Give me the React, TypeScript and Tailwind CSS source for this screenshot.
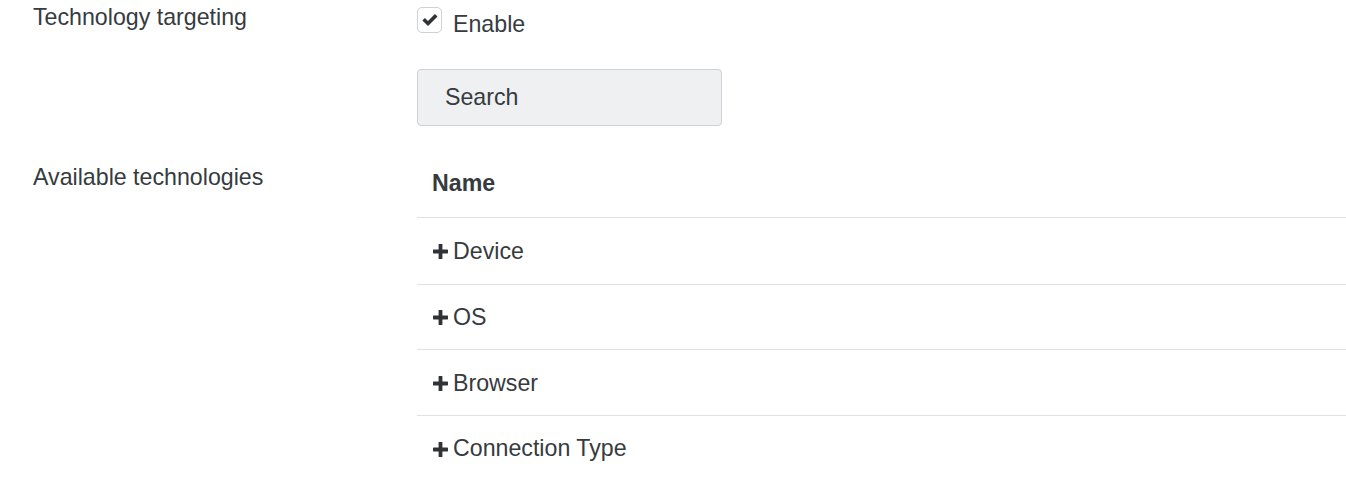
import React from "react";

const font = { fontFamily: '"Liberation Sans", Arial, Helvetica, sans-serif' };

function Plus() {
  return (
    <svg width="15" height="15" viewBox="0 0 15 15" className="mr-[5px] shrink-0" aria-hidden>
      <rect x="5.6" y="0" width="3.8" height="15" rx="0.6" fill="#2f3337" />
      <rect x="0" y="5.6" width="15" height="3.8" rx="0.6" fill="#2f3337" />
    </svg>
  );
}

function Check() {
  return (
    <svg width="16" height="12" viewBox="0 0 16 12" aria-hidden>
      <path d="M0.4 6.4 L2.9 3.9 L6 7 L12.9 0.1 L15.5 2.6 L6 12 Z" fill="#2f3337" />
    </svg>
  );
}

const rows = ["Device", "OS", "Browser", "Connection Type"];

export default function App() {
  return (
    <div className="w-[1346px] h-[496px] bg-white text-[#363b40] text-[23.2px] leading-[34.5px] overflow-hidden" style={font}>
      <div className="flex">
        <div className="w-[417px] pl-[33px] shrink-0">Technology targeting</div>
        <div className="flex-1 flex flex-col items-start">
          <div className="flex items-start pt-[7px]">
            <div className="w-[25px] h-[26px] border border-[#cdd1d4] rounded-[5px] bg-white flex items-center justify-center">
              <Check />
            </div>
            <span className="ml-[11px]">Enable</span>
          </div>
          <button className="mt-[27.5px] w-[305px] h-[56.5px] border border-[#ccd1d5] rounded-[4px] bg-[#eef0f1] text-left pl-[27px] text-[#363b40]">
            Search
          </button>
        </div>
      </div>
      <div className="flex mt-[26.5px]">
        <div className="w-[417px] pl-[33px] pt-[7.8px] shrink-0">Available technologies</div>
        <div className="flex-1">
          <div className="h-[66px] pt-[13.5px] pl-[15px] font-bold border-b border-[#dee2e6]">Name</div>
          {rows.map((r, i) => (
            <div
              key={r}
              className={`h-[65.67px] pt-[15.5px] pl-[16px] flex items-start ${i > 0 ? "border-t border-[#dee2e6]" : ""}`}
            >
              <span className="flex items-center">
                <span className="flex items-center h-[34.5px] pt-[1px]">
                  <Plus />
                </span>
                {r}
              </span>
            </div>
          ))}
        </div>
      </div>
    </div>
  );
}
